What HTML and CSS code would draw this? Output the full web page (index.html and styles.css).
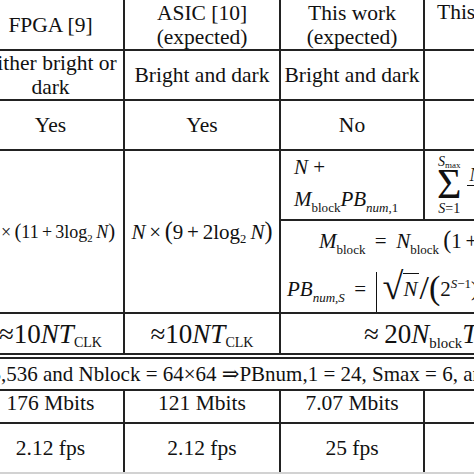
FILE: index.html
```html
<!DOCTYPE html>
<html>
<head>
<meta charset="utf-8">
<link rel="stylesheet" href="styles.css">
</head>
<body>
<div class="sheet">
  <div class="tbl">
    <div class="cell">FPGA [9]</div>
    <div class="cell">ASIC [10]<br>(expected)</div>
    <div class="cell">This work<br>(expected)</div>
    <div class="cell left top hdr4">This work (simulated)</div>

    <div class="cell">Either bright or<br>dark</div>
    <div class="cell">Bright and dark</div>
    <div class="cell">Bright and dark</div>
    <div class="cell"></div>

    <div class="cell">Yes</div>
    <div class="cell">Yes</div>
    <div class="cell">No</div>
    <div class="cell"></div>

    <div class="cell span-r2"><span class="m f18"><i>N</i><span class="op">×</span><span class="par">(</span>11<span class="op">+</span>3log<sub class="n">2</sub>&thinsp;<i>N</i><span class="par">)</span></span></div>
    <div class="cell span-r2"><span class="m f21"><i>N</i><span class="op">×</span><span class="par">(</span>9<span class="op">+</span>2log<sub class="n">2</sub>&thinsp;<i>N</i><span class="par">)</span></span></div>
    <div class="cell left top c3top"><span class="m f21 lines"><span class="ln"><i>N</i> +</span><span class="ln"><i>M</i><sub>block</sub><i>PB</i><sub><i>num</i>,1</sub></span></span></div>
    <div class="cell left c4top">
      <span class="sum"><span class="lim"><i>S</i><span class="s2">max</span></span><span class="sig">Σ</span><span class="lim"><i>S</i>=1</span></span>
      <span class="frac"><span class="num"><i>N</i><sub>block</sub></span><span class="den">2<sup><i>S</i></sup></span></span>
    </div>
    <div class="cell span-c2 left top defs">
      <span class="m f21 l1"><i>M</i><sub>block</sub><span class="op w">=</span><i>N</i><sub>block</sub>&thinsp;<span class="par">(</span>1<span class="op">+</span>2<sup>2</sup>)</span>
      <span class="m f21 l2"><i>PB</i><sub><i>num</i>,<i>S</i></sub><span class="op w">=</span><span class="floor"></span><span class="rad">√</span><span class="ov"><i>N</i></span><span class="big">/</span><span class="big">(</span>2<sup><i>S</i>−1</sup>)</span>
    </div>

    <div class="cell"><span class="m f27">≈10<i>NT</i><sub class="clk">CLK</sub></span></div>
    <div class="cell"><span class="m f27">≈10<i>NT</i><sub class="clk">CLK</sub></span></div>
    <div class="cell span-c2 left t20"><span class="m f27">≈&thinsp;20<i>N</i><sub>block</sub><i>T</i><sub class="clk">CLK</sub></span></div>

    <div class="cell span-all"></div>
    <div class="cell span-all left note">65,536 and Nblock = 64×64 ⇒PBnum,1 = 24, Smax = 6, and the rest of the setup</div>

    <div class="cell up">176 Mbits</div>
    <div class="cell up">121 Mbits</div>
    <div class="cell up">7.07 Mbits</div>
    <div class="cell up"></div>

    <div class="cell">2.12 fps</div>
    <div class="cell">2.12 fps</div>
    <div class="cell">25 fps</div>
    <div class="cell"></div>
  </div>
</div>
</body>
</html>
```

FILE: styles.css
```css
html, body {
  margin: 0;
  padding: 0;
  background: #fff;
}
body {
  width: 474px;
  height: 474px;
  overflow: hidden;
}
.sheet {
  width: 474px;
  height: 474px;
  overflow: hidden;
}
.tbl {
  display: grid;
  grid-template-columns: 145px 154px 142px 220px;
  grid-template-rows: 49px 48px 48px 68px 91px 39px 2px 30px 31px 48px;
  gap: 2px;
  background: #222;
  padding: 2px 2px 0;
  border-bottom: 2px solid #d2d2d2;
  margin: -2px 0 0 -24px;
  width: max-content;
  font-family: "Liberation Serif", "DejaVu Serif", serif;
  color: #111;
  font-size: 21.5px;
  line-height: 24px;
}
.cell {
  background: #fff;
  display: flex;
  align-items: center;
  justify-content: center;
  text-align: center;
  white-space: nowrap;
  overflow: hidden;
}
.left { justify-content: flex-start; text-align: left; }
.top { align-items: flex-start; }
.span-r2 { grid-row: span 2; }
.span-c2 { grid-column: span 2; }
.span-all { grid-column: 1 / -1; }
.hdr4 { padding-left: 12px; }
.note { padding-left: 2px; font-size: 21px; }
.up { padding-bottom: 8px; box-sizing: border-box; }

/* math */
.m { font-family: "Liberation Serif", "DejaVu Serif", serif; }
.m i { font-style: italic; }
.m sub, .m sup {
  font-size: 0.62em;
  line-height: 0;
  position: relative;
  vertical-align: baseline;
}
.m sub { top: 0.45em; }
.m sup { top: -0.6em; }
.m sub.n { top: 0.35em; font-size: 0.6em; }
.f18 { font-size: 18px; }
.f21 { font-size: 21px; }
.f22 { font-size: 22px; }
.f27 { font-size: 27px; }
.op { margin: 0 0.18em; }
.op.w { margin: 0 0.45em; }
.par { font-size: 1.15em; }
.f27 sub.clk { font-size: 0.52em; top: 0.3em; }
.f27 sub { font-size: 0.55em; top: 0.35em; }

.c3top { padding-left: 13px; }
.lines { display: flex; flex-direction: column; line-height: 32px; }
.ln { display: block; }

.c4top { padding-left: 12px; gap: 6px; }
.sum {
  display: inline-flex;
  flex-direction: column;
  align-items: center;
  font-size: 14px;
  line-height: 13px;
}
.sum .lim { display: block; height: 13px; }
.sum .lim i { font-style: italic; }
.sum .s2 { font-size: 9px; position: relative; top: 2px; }
.sig { display: block; font-size: 42px; line-height: 30px; height: 30px; margin: 1px 0 3px; }
.frac {
  display: inline-flex;
  flex-direction: column;
  align-items: center;
  font-size: 18px;
  line-height: 20px;
}
.frac .num { border-bottom: 1.5px solid #111; padding: 0 2px; }
.frac sub { font-size: 11px; line-height: 0; position: relative; top: 4px; }
.frac sup { font-size: 11px; line-height: 0; position: relative; top: -7px; }

.defs {
  flex-direction: column;
  align-items: flex-start;
  justify-content: flex-start;
}
.l1 { margin-left: 38px; line-height: 24px; margin-top: 7px; }
.l2 { margin-left: 6px; line-height: 24px; margin-top: 19px; }
.floor {
  display: inline-block;
  width: 5px;
  height: 40px;
  border-left: 1.6px solid #111;
  border-bottom: 1.6px solid #111;
  vertical-align: -17px;
  margin-right: 1px;
}
.rad { font-size: 38px; vertical-align: -3px; line-height: 0; }
.ov {
  display: inline-block;
  border-top: 1.5px solid #111;
  padding-top: 5px;
  line-height: 1;
  padding-right: 2px;
}
.big { font-size: 34px; vertical-align: -3px; line-height: 0; }

.t20 { padding-left: 83px; }
```
